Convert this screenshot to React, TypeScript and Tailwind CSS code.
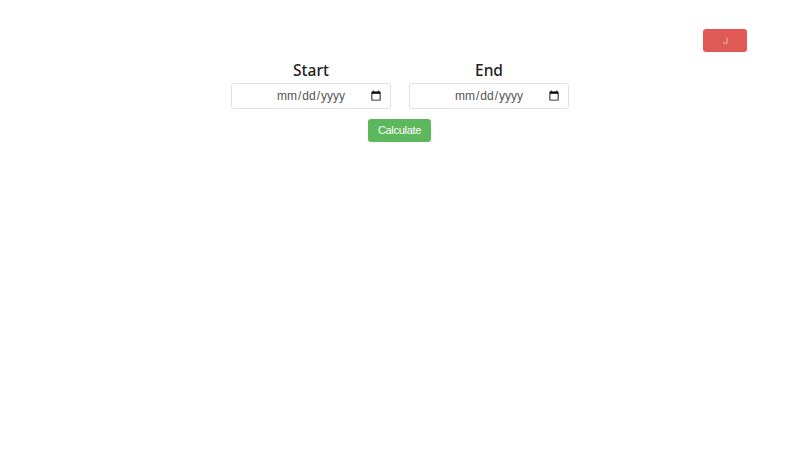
export default function App() {
  return (
    <div className="min-h-screen bg-white pt-[29px] font-['Liberation_Sans',sans-serif]">
      {/* Top bar */}
      <div className="flex justify-end pr-[53px]">
        <button className="w-[44px] h-[23px] bg-[#df5a56] rounded-[3px] text-[#f5d0ce] text-[7px] leading-none flex items-center justify-center">
          ل
        </button>
      </div>

      {/* Date fields */}
      <div className="flex justify-center gap-[18px] mt-[7px]">
        <div className="w-[160px] flex flex-col items-center">
          <h2 className="h-[22px] text-[15.5px] leading-[22px] font-medium text-[#222] font-['Noto_Sans',sans-serif]">Start</h2>
          <input
            type="date"
            className="mt-[2px] w-[160px] h-[26px] pl-[44px] pr-[8px] bg-white border border-[#e2e2e2] rounded-[3px] text-[12px] text-[#555] [&::-webkit-calendar-picker-indicator]:w-[12px] [&::-webkit-calendar-picker-indicator]:h-[12px] [&::-webkit-calendar-picker-indicator]:m-0 [&::-webkit-calendar-picker-indicator]:p-0"
          />
        </div>
        <div className="w-[160px] flex flex-col items-center">
          <h2 className="h-[22px] text-[15.5px] leading-[22px] font-medium text-[#222] font-['Noto_Sans',sans-serif]">End</h2>
          <input
            type="date"
            className="mt-[2px] w-[160px] h-[26px] pl-[44px] pr-[8px] bg-white border border-[#e2e2e2] rounded-[3px] text-[12px] text-[#555] [&::-webkit-calendar-picker-indicator]:w-[12px] [&::-webkit-calendar-picker-indicator]:h-[12px] [&::-webkit-calendar-picker-indicator]:m-0 [&::-webkit-calendar-picker-indicator]:p-0"
          />
        </div>
      </div>

      <div className="flex justify-center mt-[10px] pr-[1px]">
        <button className="w-[63px] h-[23px] bg-[#5cb85c] rounded-[3px] text-white text-[11px] tracking-[-0.3px]">
          Calculate
        </button>
      </div>
    </div>
  )
}
